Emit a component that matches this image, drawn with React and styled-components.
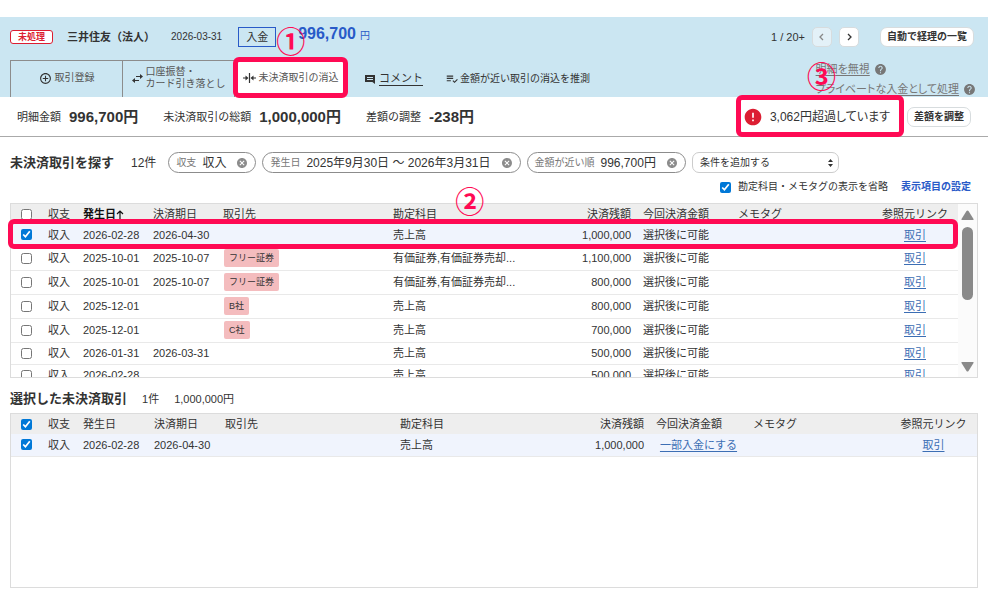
import React, { useState } from 'react';
import styled, { createGlobalStyle } from 'styled-components';
import { MdAddCircleOutline, MdCancel, MdError, MdHelp, MdPlaylistAddCheck } from 'react-icons/md';

const GlobalStyle = createGlobalStyle`
  * {
    box-sizing: border-box;
  }

  body {
    margin: 0;
    background: #fff;
    color: #333;
    font-family: 'Liberation Sans', 'Noto Sans CJK JP', sans-serif;
    font-size: 11px;
    line-height: 16px;
  }

  button,
  input,
  select {
    font-family: inherit;
    color: inherit;
    margin: 0;
  }
`;

const Page = styled.div`
  padding-top: 17px;
`;

const Header = styled.header`
  background: #cbe6f2;
`;

const HeaderTop = styled.div`
  display: flex;
  align-items: center;
  height: 43px;
  padding: 0 14px 4px 10px;
`;

const StatusBadge = styled.span`
  border: 1px solid #dc1e32;
  border-radius: 3px;
  background: #fff;
  color: #dc1e32;
  font-size: 9px;
  font-weight: 700;
  line-height: 12px;
  padding: 0 7px;
`;

const BankName = styled.span`
  font-weight: 700;
  margin-left: 14px;
`;

const EntryDate = styled.time`
  font-size: 10px;
  margin-left: 16px;
`;

const EntryType = styled.span`
  position: relative;
  border: 1px solid #285ac8;
  line-height: 18px;
  padding: 0 7px;
  margin-left: 16px;
`;

const EntryAmount = styled.span`
  color: #285ac8;
  font-size: 10px;
  margin-left: 22px;
  padding-bottom: 4px;

  strong {
    font-size: 16px;
    margin-right: 4px;
  }
`;

const Pager = styled.nav`
  display: flex;
  align-items: center;
  gap: 7px;
  margin-left: auto;
  margin-right: 21px;
`;

const PagerButton = styled.button`
  display: flex;
  align-items: center;
  justify-content: center;
  width: 20px;
  height: 20px;
  padding: 0;
  border: 1px solid #d7dcde;
  border-radius: 5px;
  background: #fff;

  &:disabled {
    background: #e3f1f8;
    color: #888;
  }
`;

const Button = styled.button`
  height: 20px;
  padding: 0 6px;
  border: 1px solid #d7dcde;
  border-radius: 7px;
  background: #fff;
  font-size: 10px;
  font-weight: 700;
  line-height: 16px;
  white-space: nowrap;
`;

const HeaderBottom = styled.div`
  display: flex;
  height: 37px;
  padding: 0 12px 0 10px;
`;

const Tab = styled.button`
  position: relative;
  display: flex;
  align-items: center;
  justify-content: center;
  gap: 3px;
  width: 112px;
  padding: 0 0 2px;
  border: solid #8c8c8c;
  border-width: 1px 0 0 1px;
  background: ${({ $active }) => ($active ? '#fff' : 'transparent')};
  color: #555;
  font-size: 10px;
  line-height: 12px;
  text-align: left;
  white-space: nowrap;

  svg {
    flex: none;
    color: #333;
  }
`;

const HeaderLinks = styled.div`
  display: flex;
  align-items: center;
  gap: 22px;
  margin-left: 19px;
`;

const CommentLink = styled.a`
  display: flex;
  align-items: center;
  gap: 4px;
  color: #333;
  text-decoration: none;

  span {
    border-bottom: 1px solid #333;
    line-height: 14px;
  }
`;

const GuessButton = styled.button`
  display: flex;
  align-items: center;
  gap: 1px;
  padding: 0;
  border: 0;
  background: none;
  font-size: 10px;
  line-height: 16px;
`;

const SubActions = styled.div`
  display: flex;
  flex-direction: column;
  align-items: flex-start;
  gap: 4px;
  margin-left: auto;
  padding-top: 1px;
`;

const SubAction = styled.a`
  display: flex;
  align-items: center;
  gap: 4px;
  color: #777;
  font-feature-settings: 'palt';
  text-underline-offset: 2px;
  white-space: nowrap;
`;

const Summary = styled.section`
  display: flex;
  align-items: center;
  gap: 25px;
  height: 40px;
  padding: 0 17px;
  border-bottom: 1px solid #aaa;
`;

const SummaryItem = styled.div`
  display: flex;
  align-items: center;
  gap: 8px;
  white-space: nowrap;

  strong {
    font-size: 15px;
  }
`;

const SummaryAlert = styled.div`
  position: relative;
  display: flex;
  align-items: center;
  gap: 7px;
  margin-left: auto;
  margin-right: -8px;
  font-size: 12px;
  font-feature-settings: 'palt';
  white-space: nowrap;

  svg {
    color: #dc1e32;
  }
`;

const FilterBar = styled.section`
  display: flex;
  align-items: center;
  gap: 6px;
  padding: 15px 10px 0;
`;

const Heading = styled.h2`
  margin: 0;
  font-size: 13px;
  font-weight: 700;
  line-height: 20px;
  white-space: nowrap;
`;

const ResultCount = styled.span`
  font-size: 12px;
  margin: 0 6px 0 11px;
`;

const FilterChip = styled.span`
  display: flex;
  align-items: center;
  height: 21px;
  padding: 0 7px;
  border: 1px solid #8c8c8c;
  border-radius: 11px;
  font-size: 12px;
  white-space: nowrap;
`;

const ChipLabel = styled.span`
  color: #777;
  font-size: 10px;
  margin-right: 6px;
`;

const ClearButton = styled.button`
  display: flex;
  padding: 0;
  margin-left: 10px;
  border: 0;
  background: none;
  color: #8c8c8c;
`;

const SelectWrap = styled.span`
  display: flex;
  align-items: center;
  height: 21px;
  width: 147px;
  padding-right: 5px;
  border: 1px solid #ccc;
  border-radius: 7px;

  select {
    flex: 1;
    appearance: none;
    border: 0;
    background: none;
    padding: 0 7px;
    font-size: 10px;
  }
`;

const Options = styled.div`
  display: flex;
  align-items: center;
  justify-content: flex-end;
  gap: 13px;
  height: 30px;
  padding: 0 17px 2px;
  font-size: 10px;
`;

const OptionLabel = styled.label`
  display: flex;
  align-items: center;
  gap: 7px;
`;

const SettingLink = styled.a`
  color: #285ac8;
  font-weight: 700;
  text-decoration: none;
`;

const Checkbox = styled.input.attrs({ type: 'checkbox' })`
  display: block;
  width: 11px;
  height: 11px;
  accent-color: #0078d7;
`;

const PanelWrap = styled.div`
  position: relative;
  margin: 0 10px;
`;

const Panel = styled.div`
  display: flex;
  align-items: flex-start;
  height: 175px;
  border: 1px solid #dcdcdc;
  overflow: hidden;
`;

const Table = styled.table`
  flex: 1;
  width: 100%;
  min-width: 0;
  border-collapse: collapse;
  table-layout: fixed;

  th,
  td {
    padding: 0 6px;
    text-align: left;
    font-weight: 400;
    line-height: 16px;
    white-space: nowrap;
  }

  th {
    height: 20px;
    background: #eee;
  }

  td {
    height: 22px;
    border-bottom: 1px solid #e9e9e9;
  }

  th:first-child,
  td:first-child {
    padding-left: 10px;
  }

  .amount {
    text-align: right;
  }

  .link {
    text-align: center;
  }
`;

const Row = styled.tr`
  background: ${({ $selected }) => ($selected ? '#f0f4fd' : '#fff')};
`;

const SortButton = styled.button`
  display: flex;
  align-items: center;
  padding: 0;
  border: 0;
  background: none;
  color: #111;
  font-size: 11px;
  font-weight: 700;
  line-height: 16px;
`;

const Partner = styled.span`
  display: inline-block;
  margin: 2px 0 3px 1px;
  padding: 0 5px;
  border-radius: 2px;
  background: #f4bcbe;
  color: #333;
  font-size: 9px;
  line-height: 18px;
  vertical-align: top;
`;

const CellLink = styled.a`
  color: #3c6eb4;
  text-underline-offset: 2px;
`;

const ScrollBar = styled.div`
  display: flex;
  flex: none;
  flex-direction: column;
  align-items: center;
  width: 19px;
  height: 100%;
  padding: 6px 0 5px;
  background: #fbfbfb;

  svg:last-child {
    margin-top: auto;
  }
`;

const ScrollThumb = styled.div`
  width: 11px;
  height: 73px;
  margin-top: 7px;
  border-radius: 6px;
  background: #8a8a8a;
`;

const SelectedHead = styled.div`
  display: flex;
  align-items: center;
  gap: 15px;
  padding: 11px 10px 4px;
`;

const Highlight = styled.span`
  position: absolute;
  inset: ${({ $inset }) => $inset};
  border: 5px solid #ff0a54;
  border-radius: 6px;
  pointer-events: none;
`;

const StepMark = styled.span`
  position: absolute;
  top: ${({ $top }) => $top}px;
  left: ${({ $left }) => $left};
  color: #ff0a54;
  font-family: 'Noto Sans CJK JP', sans-serif;
  font-size: 29px;
  font-weight: 700;
  line-height: 30px;
  pointer-events: none;
`;

const Chevron = ({ d }) => (
  <svg width="8" height="8" viewBox="0 0 8 8" fill="none" stroke="currentColor" strokeWidth="1.3">
    <path d={d} />
  </svg>
);

const TransferIcon = () => (
  <svg width="11" height="9" viewBox="0 0 11 9">
    <path d="M4 2.5h5M7 6.5H2" fill="none" stroke="currentColor" strokeWidth="1.2" />
    <path d="M8 0l3 2.5L8 5zM3 4L0 6.5 3 9z" fill="currentColor" />
  </svg>
);

const MatchIcon = () => (
  <svg width="13" height="12" viewBox="0 0 13 12">
    <path d="M0 6h3M13 6h-3M6.5 1v10" fill="none" stroke="currentColor" strokeWidth="1.2" />
    <path d="M2.5 3.5L5.5 6l-3 2.5zM10.5 3.500L7.500 6l3 2.500z" fill="currentColor" />
  </svg>
);

const CommentIcon = () => (
  <svg width="10" height="10" viewBox="0 0 10 10">
    <path d="M1 2h8v5H1z" fill="none" stroke="currentColor" strokeWidth="2" />
    <path d="M6 7h4v3zM2 4h6v1H2z" fill="currentColor" />
  </svg>
);

const SelectArrows = () => (
  <svg width="5" height="8" viewBox="0 0 5 8" fill="#333">
    <path d="M0 3l2.5-3L5 3zM0 5l2.5 3L5 5z" />
  </svg>
);

const Triangle = ({ down }) => (
  <svg width="13" height="10" viewBox="0 0 13 10" fill="#8a8a8a">
    <path d={down ? 'M1 0h11q1 0 .5 1L7.5 9q-1 1-2 0L.5 1Q0 0 1 0z' : 'M1 10h11q1 0 .5-1L7.5 1q-1-1-2 0L.5 9q-.5 1 .5 1z'} />
  </svg>
);

const filters = [
  { label: '収支', value: '収入' },
  { label: '発生日', value: '2025年9月30日 ～ 2026年3月31日' },
  { label: '金額が近い順', value: '996,700円' },
];

const deals = [
  { date: '2026-02-28', due: '2026-04-30', account: '売上高', amount: '1,000,000', selected: true },
  { date: '2025-10-01', due: '2025-10-07', partner: 'フリー証券', account: '有価証券,有価証券売却...', amount: '1,100,000' },
  { date: '2025-10-01', due: '2025-10-07', partner: 'フリー証券', account: '有価証券,有価証券売却...', amount: '800,000' },
  { date: '2025-12-01', partner: 'B社', account: '売上高', amount: '800,000' },
  { date: '2025-12-01', partner: 'C社', account: '売上高', amount: '700,000' },
  { date: '2026-01-31', due: '2026-03-31', account: '売上高', amount: '500,000' },
  { date: '2026-02-28', account: '売上高', amount: '500,000' },
];

const dealColumns = [31, 35, 70, 70, 170, null, 80, 95, 140, 86];
const selectedColumns = [31, 35, 71, 71, 175, null, 80, 97, 143, 87];

const DealTable = ({ rows, columns, sortable, allChecked, onToggle, action }) => (
  <Table>
    <colgroup>
      {columns.map((width, i) => (
        <col key={i} style={width ? { width } : undefined} />
      ))}
    </colgroup>
    <thead>
      <tr>
        <th><Checkbox aria-label="すべて選択" defaultChecked={allChecked} /></th>
        <th>収支</th>
        <th>
          {sortable ? (
            <SortButton>
              発生日
              <svg width="8" height="9" viewBox="0 0 8 9" fill="none" stroke="currentColor" strokeWidth="1.2">
                <path d="M4 9V1M1 4l3-3 3 3" />
              </svg>
            </SortButton>
          ) : '発生日'}
        </th>
        <th>決済期日</th>
        <th>取引先</th>
        <th>勘定科目</th>
        <th className="amount">決済残額</th>
        <th>今回決済金額</th>
        <th>メモタグ</th>
        <th className="link">参照元リンク</th>
      </tr>
    </thead>
    <tbody>
      {rows.map((row, i) => (
        <Row key={i} $selected={row.selected}>
          <td>
            <Checkbox
              aria-label={`${row.date} ${row.amount}`}
              checked={!!row.selected}
              onChange={() => onToggle(row)}
            />
          </td>
          <td>収入</td>
          <td>{row.date}</td>
          <td>{row.due}</td>
          <td>{row.partner && <Partner>{row.partner}</Partner>}</td>
          <td>{row.account}</td>
          <td className="amount">{row.amount}</td>
          {action ? (
            <td className="link"><CellLink href="#partial">{action}</CellLink></td>
          ) : (
            <td>選択後に可能</td>
          )}
          <td />
          <td className="link"><CellLink href="#deal">取引</CellLink></td>
        </Row>
      ))}
    </tbody>
  </Table>
);

const App = () => {
  const [rows, setRows] = useState(deals);

  const toggle = (target) => {
    setRows(rows.map(row => (row === target ? { ...row, selected: !row.selected } : row)));
  };

  return (
    <Page>
      <GlobalStyle />
      <Header>
        <HeaderTop>
          <StatusBadge>未処理</StatusBadge>
          <BankName>三井住友（法人）</BankName>
          <EntryDate>2026-03-31</EntryDate>
          <EntryType>
            入金
            <StepMark $top={-3} $left="37px">①</StepMark>
          </EntryType>
          <EntryAmount><strong>996,700</strong>円</EntryAmount>
          <Pager>
            <span>1 / 20+</span>
            <PagerButton disabled aria-label="前へ"><Chevron d="M5 1L2 4l3 3" /></PagerButton>
            <PagerButton aria-label="次へ"><Chevron d="M3 1l3 3-3 3" /></PagerButton>
          </Pager>
          <Button>自動で経理の一覧</Button>
        </HeaderTop>
        <HeaderBottom>
          <Tab><MdAddCircleOutline size={13} />取引登録</Tab>
          <Tab>
            <TransferIcon />
            <span>口座振替・<br />カード引き落とし</span>
          </Tab>
          <Tab $active>
            <MatchIcon />未決済取引の消込
            <Highlight $inset="-4px -2px -1px -2px" />
          </Tab>
          <HeaderLinks>
            <CommentLink href="#comment"><CommentIcon /><span>コメント</span></CommentLink>
            <GuessButton><MdPlaylistAddCheck size={14} />金額が近い取引の消込を推測</GuessButton>
          </HeaderLinks>
          <SubActions>
            <SubAction href="#ignore">明細を無視<MdHelp size={13} /></SubAction>
            <SubAction href="#private">プライベートな入金として処理<MdHelp size={13} /></SubAction>
          </SubActions>
        </HeaderBottom>
      </Header>

      <Summary>
        <SummaryItem>明細金額<strong>996,700円</strong></SummaryItem>
        <SummaryItem>未決済取引の総額<strong>1,000,000円</strong></SummaryItem>
        <SummaryItem>差額の調整<strong>-238円</strong></SummaryItem>
        <SummaryAlert role="alert">
          <MdError size={20} />
          3,062円超過しています
          <Highlight $inset="-12px -14px -10px -7px" />
          <StepMark $top={-47} $left="64px">③</StepMark>
        </SummaryAlert>
        <Button>差額を調整</Button>
      </Summary>

      <FilterBar>
        <Heading>未決済取引を探す</Heading>
        <ResultCount>12件</ResultCount>
        {filters.map(filter => (
          <FilterChip key={filter.label}>
            <ChipLabel>{filter.label}</ChipLabel>
            {filter.value}
            <ClearButton aria-label={`${filter.label}を解除`}><MdCancel size={12} /></ClearButton>
          </FilterChip>
        ))}
        <SelectWrap>
          <select aria-label="条件を追加する" defaultValue="">
            <option value="">条件を追加する</option>
          </select>
          <SelectArrows />
        </SelectWrap>
      </FilterBar>

      <Options>
        <OptionLabel>
          <Checkbox defaultChecked />
          勘定科目・メモタグの表示を省略
        </OptionLabel>
        <SettingLink href="#columns">表示項目の設定</SettingLink>
      </Options>

      <PanelWrap>
        <Panel>
          <DealTable rows={rows} columns={dealColumns} sortable onToggle={toggle} />
          <ScrollBar>
            <Triangle />
            <ScrollThumb />
            <Triangle down />
          </ScrollBar>
        </Panel>
        <Highlight $inset="16px 20px 129px -2px" />
        <StepMark $top={-18} $left="46%">②</StepMark>
      </PanelWrap>

      <SelectedHead>
        <Heading>選択した未決済取引</Heading>
        <span>1件</span>
        <span>1,000,000円</span>
      </SelectedHead>

      <PanelWrap>
        <Panel>
          <DealTable
            rows={rows.filter(row => row.selected)}
            columns={selectedColumns}
            allChecked
            onToggle={toggle}
            action="一部入金にする"
          />
        </Panel>
      </PanelWrap>
    </Page>
  );
};

export default App;
